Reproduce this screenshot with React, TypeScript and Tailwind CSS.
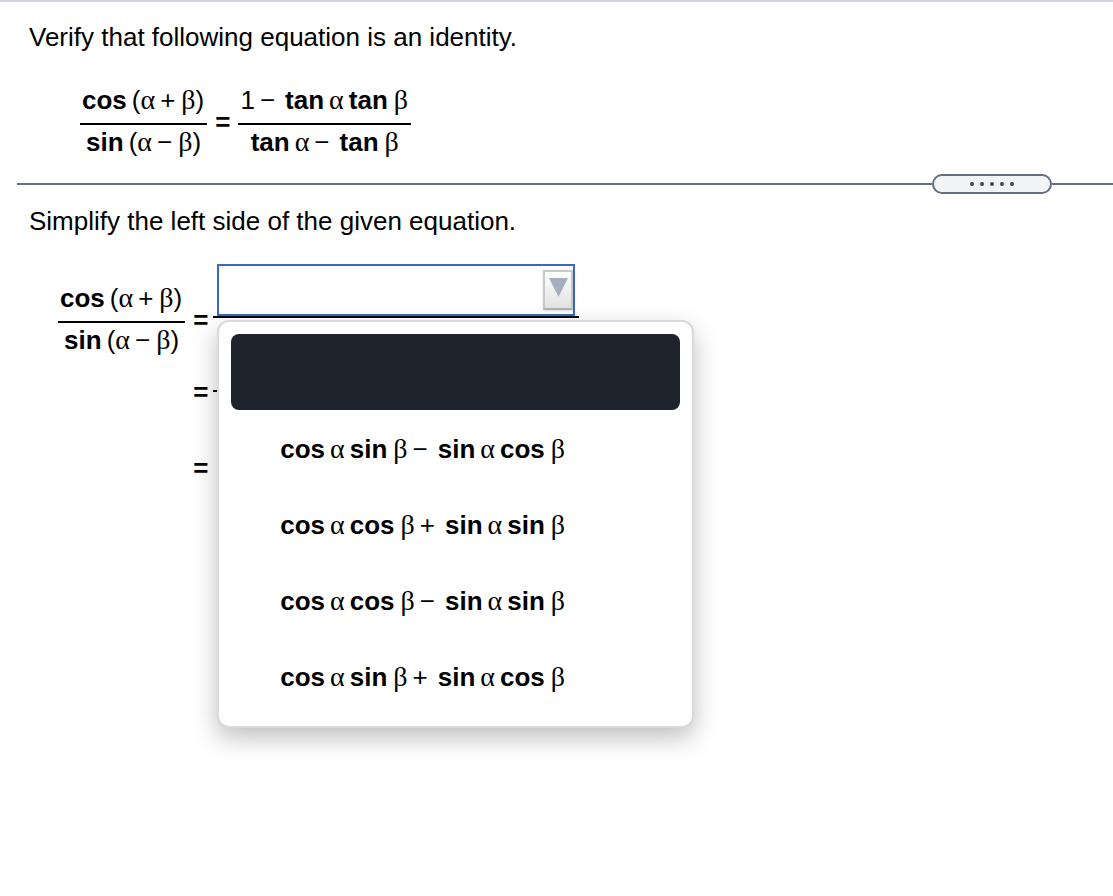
import { useState } from "react";

const OPTIONS = [
  "",
  "cos α sin β − sin α cos β",
  "cos α cos β + sin α sin β",
  "cos α cos β − sin α sin β",
  "cos α sin β + sin α cos β",
];

const GREEK = "font-['Liberation_Serif',serif] text-[28px] leading-none";

// Bold function names, serif greek letters, plain operators
function Expr({ text }: { text: string }) {
  return (
    <span className="flex items-baseline gap-[5px] whitespace-nowrap">
      {text.split(" ").map((token, i) => {
        if (/^(sin|cos|tan)$/.test(token)) {
          return (
            <span key={i} className="font-bold">
              {token}
            </span>
          );
        }
        if (/^[+−]$/.test(token)) {
          return (
            <span key={i} className={text.includes("(") ? "" : "mr-[5px]"}>
              {token}
            </span>
          );
        }
        return (
          <span key={i} className={token.includes("β") ? "flex items-baseline pl-px" : "flex items-baseline"}>
            {token.split("").map((ch, j) => (
              <span key={j} className={/[αβ]/.test(ch) ? GREEK : ""}>
                {ch}
              </span>
            ))}
          </span>
        );
      })}
    </span>
  );
}

function Fraction({ top, bottom }: { top: string; bottom: string }) {
  return (
    <div className="flex flex-col items-center">
      <div className="pr-[3px] pl-[2px] pb-2">
        <Expr text={top} />
      </div>
      <div className="h-[2px] w-full bg-black" />
      <div className="px-[2px] pt-[2px]">
        <Expr text={bottom} />
      </div>
    </div>
  );
}

function Equals() {
  return <span className="px-2 pt-[2px] font-bold">=</span>;
}

export default function App() {
  const [open, setOpen] = useState(true);
  const [selected, setSelected] = useState("");

  const choose = (option: string) => {
    setSelected(option);
    setOpen(false);
  };

  return (
    <main className="min-h-screen border-t-2 border-[#cfd0dc] bg-white pt-5 font-['Liberation_Sans',Arial,sans-serif] text-[26px] leading-[30px] text-black">
      <h1 className="px-[29px]">Verify that following equation is an identity.</h1>

      <div className="mt-[33px] flex items-center pl-20">
        <Fraction top="cos (α + β)" bottom="sin (α − β)" />
        <Equals />
        <Fraction top="1 − tan α tan β" bottom="tan α − tan β" />
      </div>

      {/* Divider with drag handle */}
      <div className="mt-[17px] ml-[17px] flex items-center">
        <div className="h-[2px] grow bg-[#636f80]" />
        <button
          type="button"
          aria-label="Resize panels"
          className="flex h-5 w-[120px] items-center justify-center gap-[6px] rounded-full border-2 border-[#636f80] bg-[#f2f4f5]"
        >
          {[0, 1, 2, 3, 4].map((dot) => (
            <span key={dot} className="size-1 rounded-full bg-[#444]" />
          ))}
        </button>
        <div className="h-[2px] w-[61px] bg-[#636f80]" />
      </div>

      <h2 className="mt-3 px-[29px]">Simplify the left side of the given equation.</h2>

      <div className="mt-7 ml-[58px] grid grid-cols-[max-content_28px_366px]">
        <div className="self-end">
          <Fraction top="cos (α + β)" bottom="sin (α − β)" />
        </div>
        <div className="flex h-[72px] items-center self-end">
          <Equals />
        </div>
        <div className="relative pb-[37px]">
          <div className="relative px-1">
            <select
              aria-label="Numerator"
              value={selected}
              onMouseDown={(e) => {
                e.preventDefault();
                setOpen(!open);
              }}
              onChange={(e) => choose(e.target.value)}
              className="block h-[52px] w-full appearance-none border-2 border-[#3b68c4] bg-white px-2 outline-none"
            >
              {OPTIONS.map((option) => (
                <option key={option} value={option}>
                  {option}
                </option>
              ))}
            </select>
            <span className="pointer-events-none absolute top-[6px] right-[6px] flex h-10 w-[30px] justify-center border-2 border-[#c8c8c8] border-b-[#b0b0b0] bg-linear-to-b from-white to-[#e2e2e2] pt-[6px] shadow-sm">
              <svg width="19" height="19" viewBox="0 0 19 19" aria-hidden="true">
                <path d="M0 0H19L9.5 19Z" fill="#a7aebf" />
              </svg>
            </span>
          </div>
          <div className="h-[2px] bg-black" />

          {open && (
            <ul
              role="listbox"
              aria-label="Numerator options"
              className="absolute top-14 left-1 z-10 w-[477px] rounded-xl border-2 border-[#d9d9d9] bg-white p-3 shadow-[0_10px_24px_rgba(0,0,0,0.25)]"
            >
              {OPTIONS.map((option) => (
                <li key={option} role="option" aria-selected={option === selected}>
                  <button
                    type="button"
                    aria-label={option || "Blank"}
                    onClick={() => choose(option)}
                    className={
                      option === selected
                        ? "flex h-[76px] w-full items-center rounded-lg bg-[#1f232d] px-[49px] pt-[2px] text-white"
                        : "flex h-[76px] w-full items-center rounded-lg px-[49px] pt-[2px]"
                    }
                  >
                    {option && <Expr text={option} />}
                  </button>
                </li>
              ))}
            </ul>
          )}
        </div>

        <div className="col-start-2 flex h-[72px] items-center">
          <Equals />
        </div>
        <div className="h-[2px] self-center bg-black" />

        <div className="col-start-2 flex h-20 items-center">
          <Equals />
        </div>
      </div>
    </main>
  );
}
